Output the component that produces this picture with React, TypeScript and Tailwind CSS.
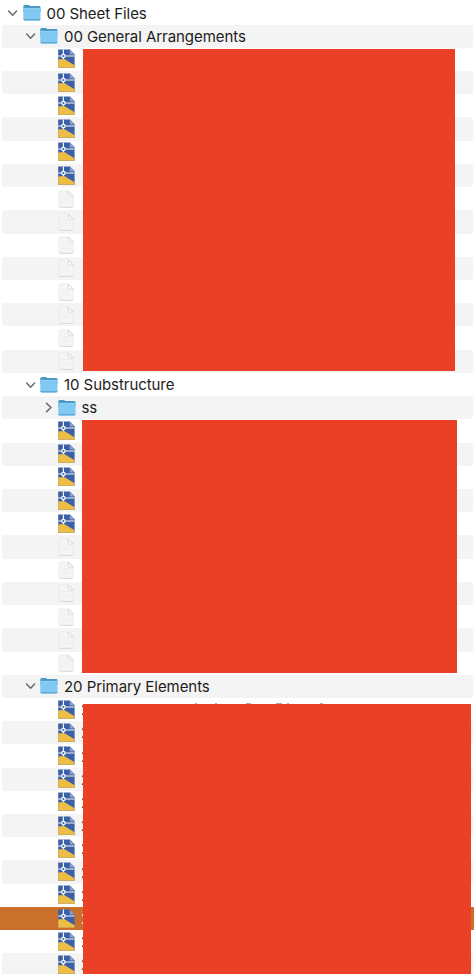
import React from 'react';

type Kind = 'folder' | 'drawing' | 'document';

interface Row {
  kind: Kind;
  depth: 0 | 1 | 2;
  name?: string;
  open?: boolean;
  selected?: boolean;
  peek?: boolean;
}

const files = (kind: Kind, count: number, peek = false): Row[] =>
  Array.from({ length: count }, () => ({ kind, depth: 2, peek }));

const rows: Row[] = [
  { kind: 'folder', depth: 0, name: '00 Sheet Files', open: true },
  { kind: 'folder', depth: 1, name: '00 General Arrangements', open: true },
  ...files('drawing', 6),
  ...files('document', 8),
  { kind: 'folder', depth: 1, name: '10 Substructure', open: true },
  { kind: 'folder', depth: 2, name: 'ss' },
  ...files('drawing', 5),
  ...files('document', 6),
  { kind: 'folder', depth: 1, name: '20 Primary Elements', open: true },
  ...files('drawing', 9, true),
  { kind: 'drawing', depth: 2, selected: true, peek: true },
  ...files('drawing', 2, true),
];

const indent = { 0: 'pl-[7px]', 1: 'pl-[24.5px]', 2: 'pl-[42px]' };

const Chevron = ({ open }: { open?: boolean }) => (
  <svg width="12" height="12" viewBox="0 0 12 12" fill="none" stroke="#6f6f6f" strokeWidth="1.6" strokeLinecap="round" strokeLinejoin="round" className="shrink-0">
    <path d={open ? 'M1.6 4L5.6 8.2L9.6 4' : 'M4.6 1.4L9 5.5L4.6 9.6'} />
  </svg>
);

const FolderIcon = () => (
  <svg width="18" height="18" viewBox="0 0 18 18" className="shrink-0">
    <path d="M.3 2.5Q.3 1 1.6 1H5.5Q6.2 1 6.8 1.6L7.4 2.1H16.2Q17.5 2.1 17.5 3.4V8H.3Z" fill="#4b97c5" />
    <path d="M.3 4H17.5V15.1Q17.5 16.4 16.2 16.4H1.6Q.3 16.4.3 15.1Z" fill="#80c9f3" />
    <path d="M.3 4.4H17.5" stroke="#92d5f8" strokeWidth=".7" />
    <path d="M.3 15H17.5V15.1Q17.5 16.4 16.2 16.4H1.6Q.3 16.4.3 15.1Z" fill="#62acd7" />
  </svg>
);

const DrawingIcon = () => (
  <svg width="18" height="20" viewBox="0 0 18 20" className="shrink-0">
    <path d="M.2.6H12L16.6 5.2V18.8H.2Z" fill="#3c60a5" />
    <path d="M.2 10.6L6.2 10L16.6 16.2V18.8H.2Z" fill="#eebd46" />
    <path d="M11.8.6L16.6 5.4H11.8Z" fill="#8e9fc8" />
    <path d="M5.4.6V10M.2 7H16.6" stroke="#f4f8ff" strokeWidth="1.2" />
    <circle cx="5.4" cy="7" r="1.7" fill="#3c60a5" stroke="#fff" strokeWidth="1.2" />
  </svg>
);

const DocumentIcon = () => (
  <svg width="18" height="20" viewBox="0 0 18 20" className="shrink-0">
    <path d="M2.3 1.9H10.5L15.3 6.7V17.1Q15.3 18.3 14.1 18.3H2.3Q1.1 18.3 1.1 17.1V3.1Q1.1 1.9 2.3 1.9Z" fill="#f5f5f5" stroke="#e2e2e2" strokeWidth=".6" />
    <path d="M1.6 18.4H14.9" stroke="#c9c9c9" strokeWidth=".6" />
    <path d="M10.3 2V5.8Q10.3 7 11.5 7H15.2Z" fill="#fff" stroke="#cfcfcf" strokeWidth=".7" />
    <path d="M3.5 8.5H12.5M3.5 11H12.5M3.5 13.5H12.5" stroke="#ececec" strokeWidth=".8" />
  </svg>
);

const icons = { folder: FolderIcon, drawing: DrawingIcon, document: DocumentIcon };

const TreeRow = ({ row, striped }: { row: Row; striped: boolean }) => {
  const Icon = icons[row.kind];
  const background = row.selected ? 'bg-[#c9702c]' : striped ? 'mx-[1.5px] rounded-[2px] bg-[#f4f4f4]' : '';
  return (
    <div className={`h-[23.22px] ${background}`}>
      <div className={`flex h-full items-center ${indent[row.depth]} ${striped && !row.selected ? '-ml-[1.5px]' : ''}`}>
        <span className="flex w-[15.5px] shrink-0">{row.kind === 'folder' && <Chevron open={row.open} />}</span>
        <Icon />
        {row.name && <span className="ml-[6px] whitespace-nowrap text-[15px] leading-[23px] tracking-[-0.06px] text-[#1c1c1c]">{row.name}</span>}
        {row.peek && <span className={`ml-[5.5px] text-[14px] leading-[23px] ${row.selected ? 'text-white' : 'text-[#333]'}`}>2</span>}
      </div>
    </div>
  );
};

// Tips of the tall letters that stick out above the last block
const Ascenders = () => (
  <div className="absolute left-[195px] top-[703px] flex items-start text-[#999]">
    <i className="h-px w-[2px] bg-[#b9aaa8]" />
    <i className="ml-[18px] h-px w-[2px] bg-[#b9aaa8]" />
    <i className="ml-[29px] h-px w-[5px] bg-[#b9aaa8]" />
    <i className="ml-[25px] h-px w-[6px] bg-[#b9aaa8]" />
    <i className="ml-[5px] h-px w-[2px] bg-[#b9aaa8]" />
    <i className="ml-[31px] h-px w-[3px] bg-[#b9aaa8]" />
  </div>
);

const App: React.FC = () => (
  <main className="relative h-[974px] w-[474px] overflow-hidden bg-white pt-[1.4px] font-['Inter','Liberation_Sans',sans-serif]">
    {rows.map((row, index) => (
      <TreeRow key={index} row={row} striped={index % 2 === 1} />
    ))}

    {/* Redaction blocks over the file names */}
    <div className="absolute left-[82.5px] top-[49.4px] h-[321.5px] w-[372.3px] bg-[#ea4126]" />
    <div className="absolute left-[82px] top-[420px] h-[252.5px] w-[375.4px] bg-[#ea4126]" />
    <div className="absolute left-[83px] top-[704px] h-[270px] w-[388px] bg-[#ea4126]" />
    <Ascenders />
  </main>
);

export default App;
